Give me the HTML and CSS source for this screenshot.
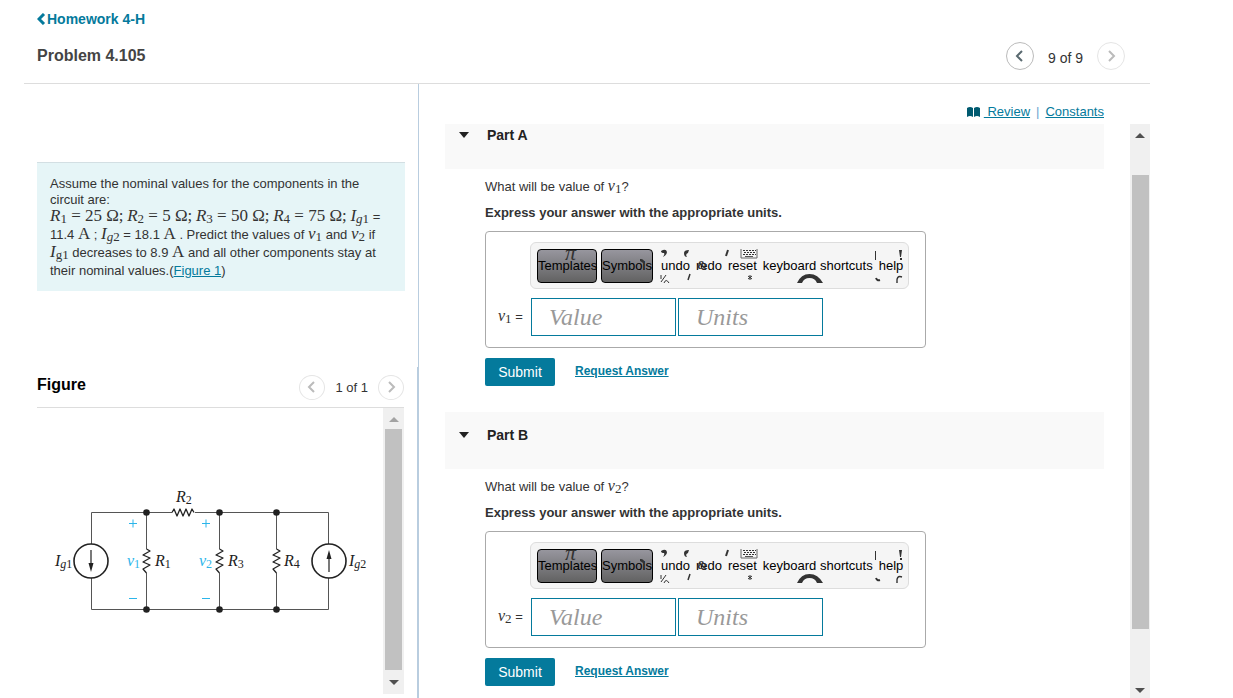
FILE: index.html
```html
<!DOCTYPE html>
<html lang="en">
<head>
    <meta charset="UTF-8">
    <meta name="viewport" content="width=device-width, initial-scale=1.0">
    <title>Problem 4.105</title>
    <link rel="stylesheet" href="styles.css">
</head>
<body>

<svg class="defs" aria-hidden="true">
    <symbol id="chev-left" viewBox="0 0 12 14"><path d="M8 2 L3 7 L8 12" fill="none" stroke="currentColor" stroke-width="2"/></symbol>
    <symbol id="chev-right" viewBox="0 0 12 14"><path d="M4 2 L9 7 L4 12" fill="none" stroke="currentColor" stroke-width="2"/></symbol>
    <symbol id="arrow-up" viewBox="0 0 10 6"><path d="M0 5 L5 0 L10 5 Z" fill="currentColor"/></symbol>
    <symbol id="arrow-down" viewBox="0 0 10 6"><path d="M0 0 L10 0 L5 5 Z" fill="currentColor"/></symbol>
    <symbol id="arrow-part" viewBox="0 0 10 6"><path d="M0 0 L10 0 L5 6 Z" fill="currentColor"/></symbol>
    <symbol id="glyphs" viewBox="1 1 378 47">
        <text x="35" y="18" font-family="Liberation Serif, serif" font-style="italic" font-size="22">π</text>
        <path d="M110 17 Q115 16 115 24 Q113 20 110 19 Z"/>
        <path d="M131 9 Q136 6 137 10 Q137 13 133 15 Q135 12 134 11 Q131 11 131 9 Z"/>
        <path d="M159 8 Q154 8 154 11 Q154 15 157 15 Q155 12 158 11 Z"/>
        <text x="167" y="27" font-family="Liberation Serif, serif" font-weight="bold" font-size="13">&amp;</text>
        <path d="M198 8 L196 14" stroke="#333" stroke-width="2"/>
        <path d="M211 7 V16 H227 V7" fill="none" stroke="#666"/>
        <path d="M213 8.500 H226 M214 10.500 H226 M213 12.500 H226" stroke="#333" stroke-width="1" stroke-dasharray="2 1"/>
        <path d="M215 14.500 H223" stroke="#555"/>
        <path d="M131 33 V37 M136 33 L131 40 M134 41 Q136 36 139 41" fill="none" stroke="#333"/>
        <path d="M160 32 L158 38" stroke="#333" stroke-width="1.500"/>
        <path d="M220 33 V38 M218 34 L222 37 M222 34 L218 37" stroke="#333"/>
        <path d="M267 41 Q271 32 279.500 32 Q288 32 293 41 H287 Q285 36 279.500 36 Q274 36 272 41 Z"/>
        <path d="M345.500 9 V18" stroke="#333"/>
        <path d="M369 8 H372 L371 15 H370 Z M370 16 H372 V18 H370 Z"/>
        <path d="M346 36 Q347 39 350 38" fill="none" stroke="#333" stroke-width="2"/>
        <path d="M372 35 Q366 33 367 41" fill="none" stroke="#333" stroke-width="1.500"/>
    </symbol>
</svg>

<div class="page">
    <header class="header">
        <a href="#" class="back">
            <svg width="9" height="12" viewBox="0 0 9 12"><path d="M7 1 L2 6 L7 11" fill="none" stroke="currentColor" stroke-width="3"/></svg>
            Homework 4-H
        </a>
        <div class="title-row">
            <h1>Problem 4.105</h1>
            <div class="pager">
                <button class="circle" aria-label="Previous problem"><svg width="12" height="14"><use href="#chev-left"/></svg></button>
                <span>9 of 9</span>
                <button class="circle off" aria-label="Next problem" disabled><svg width="12" height="14"><use href="#chev-right"/></svg></button>
            </div>
        </div>
    </header>

    <div class="columns">
        <div class="left">
            <div class="problem">
                <div class="statement">
                    <p>Assume the nominal values for the components in the circuit are:</p>
                    <p class="values"><span class="m"><i>R</i><sub>1</sub> = 25 Ω;</span> <span class="m"><i>R</i><sub>2</sub> = 5 Ω;</span> <span class="m"><i>R</i><sub>3</sub> = 50 Ω;</span> <span class="m"><i>R</i><sub>4</sub> = 75 Ω;</span> <span class="m"><i>I</i><sub><i>g</i>1</sub></span> = 11.4 <span class="m">A</span> ; <span class="m"><i>I</i><sub><i>g</i>2</sub></span> = 18.1 <span class="m">A</span> . Predict the values of <span class="m"><i>v</i><sub>1</sub></span> and <span class="m"><i>v</i><sub>2</sub></span> if <span class="m"><i>I</i><sub>g1</sub></span> decreases to 8.9 <span class="m">A</span> and all other components stay at their nominal values.(<a href="#figure">Figure 1</a>)</p>
                </div>
            </div>
            <div class="figure" id="figure">
                <div class="figure-head">
                    <h2>Figure</h2>
                    <div class="pager small">
                        <button class="circle off" aria-label="Previous figure" disabled><svg width="12" height="14"><use href="#chev-left"/></svg></button>
                        <span>1 of 1</span>
                        <button class="circle off" aria-label="Next figure" disabled><svg width="12" height="14"><use href="#chev-right"/></svg></button>
                    </div>
                </div>
                <div class="figure-body">
                    <div class="canvas">
                        <svg class="circuit" width="340" height="150" viewBox="0 0 340 150" role="img" aria-label="Circuit with two current sources and four resistors">
                            <g fill="none" stroke="#555" stroke-width="1">
                                <path d="M51.5 64 V32.5 H132 M155 32.5 H288.5 V64 M51.5 98 V129.5 H288.5 V98"/>
                                <path d="M106.5 32 V69 M106.5 93 V129 M179.5 32 V69 M179.5 93 V129 M236.5 32 V69 M236.5 93 V129"/>
                            </g>
                            <g fill="none" stroke="#222" stroke-width="1.3" stroke-linejoin="round">
                                <path d="M132 32.5 L134 29 L137 36 L140 29 L143 36 L146 29 L149 36 L152 29 L154 32.5"/>
                                <path d="M106.5 69 L110 71 L103 75 L110 78 L103 82 L110 85 L103 89 L106.5 93"/>
                                <path d="M179.5 69 L183 71 L176 75 L183 78 L176 82 L183 85 L176 89 L179.5 93"/>
                                <path d="M236.5 69 L240 71 L233 75 L240 78 L233 82 L240 85 L233 89 L236.5 93"/>
                            </g>
                            <g fill="#fff" stroke="#222" stroke-width="1.6">
                                <circle cx="51" cy="81" r="17"/>
                                <circle cx="289" cy="81" r="17"/>
                            </g>
                            <path d="M51 70 V84 M289 92 V78" stroke="#222" stroke-width="1.2"/>
                            <path d="M48.500 83 H53.500 L51 92 Z M286.500 79 H291.500 L289 70 Z" fill="#222"/>
                            <g fill="#222">
                                <circle cx="106.500" cy="32.500" r="3.300"/>
                                <circle cx="179.500" cy="32.500" r="3.300"/>
                                <circle cx="236.500" cy="32.500" r="3.300"/>
                                <circle cx="106.500" cy="129.500" r="3.300"/>
                                <circle cx="179.500" cy="129.500" r="3.300"/>
                                <circle cx="236.500" cy="129.500" r="3.300"/>
                            </g>
                            <path d="M89 43.500 H97 M93 39.500 V47.500 M162 43.500 H170 M166 39.500 V47.500 M89 118.500 H97 M162 118.500 H170" stroke="#2bb5ea"/>
                            <g class="labels">
                                <text x="136" y="22">R<tspan class="s" dy="2">2</tspan></text>
                                <text x="115" y="86">R<tspan class="s" dy="2">1</tspan></text>
                                <text x="188" y="86">R<tspan class="s" dy="2">3</tspan></text>
                                <text x="244" y="86">R<tspan class="s" dy="2">4</tspan></text>
                                <text x="15" y="86">I<tspan class="g" dy="2">g</tspan><tspan class="s">1</tspan></text>
                                <text x="309" y="86">I<tspan class="g" dy="2">g</tspan><tspan class="s">2</tspan></text>
                                <text class="blue" x="87" y="86">v<tspan class="s" dy="2">1</tspan></text>
                                <text class="blue" x="159" y="86">v<tspan class="s" dy="2">2</tspan></text>
                            </g>
                        </svg>
                    </div>
                    <div class="scrollbar fig-scroll">
                        <svg class="dim" width="10" height="6"><use href="#arrow-up"/></svg>
                        <div class="thumb"></div>
                        <svg width="10" height="6"><use href="#arrow-down"/></svg>
                    </div>
                </div>
            </div>
        </div>

        <div class="right">
            <nav class="links">
                <svg width="13" height="10" viewBox="0 0 13 10"><path d="M0 1 Q3 -1 6 1 V10 Q3 8 0 10 Z M7 1 Q10 -1 13 1 V10 Q10 8 7 10 Z" fill="#005a70"/></svg>
                <a href="#" class="review">&nbsp;Review</a><span class="bar">|</span><a href="#">Constants</a>
            </nav>
            <div class="scroller">
                <div class="parts">
                    <section class="part">
                        <div class="part-head"><svg width="10" height="6"><use href="#arrow-part"/></svg><h2>Part A</h2></div>
                        <div class="part-body">
                            <p>What will be value of <span class="m"><i>v</i><sub>1</sub></span>?</p>
                            <p class="bold">Express your answer with the appropriate units.</p>
                            <div class="answer">
                                <div class="toolbar">
                                    <button class="dark templates">Templates</button>
                                    <button class="dark symbols">Symbols</button>
                                    <button>undo</button>
                                    <button>redo</button>
                                    <button>reset</button>
                                    <button>keyboard shortcuts</button>
                                    <button>help</button>
                                    <svg class="overlay" width="378" height="47" aria-hidden="true"><use href="#glyphs"/></svg>
                                </div>
                                <div class="entry">
                                    <label for="value-a"><span class="m"><i>v</i><sub>1</sub></span> =</label>
                                    <input type="text" id="value-a" placeholder="Value">
                                    <input type="text" id="units-a" placeholder="Units" aria-label="Units">
                                </div>
                            </div>
                            <div class="actions">
                                <button class="submit">Submit</button>
                                <a href="#">Request Answer</a>
                            </div>
                        </div>
                    </section>
                    <section class="part">
                        <div class="part-head"><svg width="10" height="6"><use href="#arrow-part"/></svg><h2>Part B</h2></div>
                        <div class="part-body">
                            <p>What will be value of <span class="m"><i>v</i><sub>2</sub></span>?</p>
                            <p class="bold">Express your answer with the appropriate units.</p>
                            <div class="answer">
                                <div class="toolbar">
                                    <button class="dark templates">Templates</button>
                                    <button class="dark symbols">Symbols</button>
                                    <button>undo</button>
                                    <button>redo</button>
                                    <button>reset</button>
                                    <button>keyboard shortcuts</button>
                                    <button>help</button>
                                    <svg class="overlay" width="378" height="47" aria-hidden="true"><use href="#glyphs"/></svg>
                                </div>
                                <div class="entry">
                                    <label for="value-b"><span class="m"><i>v</i><sub>2</sub></span> =</label>
                                    <input type="text" id="value-b" placeholder="Value">
                                    <input type="text" id="units-b" placeholder="Units" aria-label="Units">
                                </div>
                            </div>
                            <div class="actions">
                                <button class="submit">Submit</button>
                                <a href="#">Request Answer</a>
                            </div>
                        </div>
                    </section>
                </div>
                <div class="scrollbar main-scroll">
                    <svg width="10" height="6"><use href="#arrow-up"/></svg>
                    <div class="thumb"></div>
                    <svg width="10" height="6"><use href="#arrow-down"/></svg>
                </div>
            </div>
        </div>
    </div>
</div>

</body>
</html>
```

FILE: styles.css
```css
* {
    box-sizing: border-box;
}
body {
    margin: 0;
    background: white;
    color: #333;
    font-family: "Liberation Sans", Arial, sans-serif;
    font-size: 13px;
    line-height: 16px;
}
h1, h2, p {
    margin: 0;
}
button {
    font-family: inherit;
    padding: 0;
    border: none;
    background: none;
}
a {
    color: #047a9c;
}
.defs {
    display: none;
}
.page {
    display: flex;
    flex-direction: column;
    height: 100vh;
    margin: 0 83px 0 24px;
    overflow: hidden;
}

/* header */
.header {
    padding: 11px 25px 13px 13px;
    border-bottom: 1px solid #ddd;
}
.back {
    display: flex;
    align-items: center;
    gap: 1px;
    font-size: 14px;
    font-weight: bold;
    text-decoration: none;
}
.title-row {
    display: flex;
    justify-content: space-between;
    align-items: center;
    margin-top: 15px;
}
h1 {
    font-size: 16px;
    color: #444;
}
.pager {
    display: flex;
    align-items: center;
    gap: 14px;
    font-size: 14px;
}
.pager span {
    padding-top: 4px;
}
.circle {
    display: flex;
    align-items: center;
    justify-content: center;
    width: 28px;
    height: 28px;
    border: 1px solid #bbb;
    border-radius: 50%;
    color: #5a6a70;
}
.circle.off {
    border-color: #e5e5e5;
    color: #bbb;
}
.small {
    gap: 10px;
    font-size: 13px;
}
.small .circle {
    width: 26px;
    height: 25px;
}
.small span {
    padding-top: 2px;
}

/* left column */
.columns {
    display: flex;
    flex: 1;
    min-height: 0;
}
.left {
    display: flex;
    flex-direction: column;
    width: 395px;
}
.problem {
    height: 283px;
    padding: 78px 13px 0 13px;
    border-right: 1px solid #b9cddf;
}
.statement {
    padding: 13px 13px 11px;
    border-top: 1px solid #d3dfe3;
    background: #e6f5f7;
}
.values {
    line-height: 18px;
}
.m {
    font-family: "Liberation Serif", "Times New Roman", serif;
    font-size: 17px;
    line-height: 0;
    white-space: nowrap;
}
.m sub {
    font-size: 13px;
    line-height: 0;
    vertical-align: -2px;
}
.figure {
    display: flex;
    flex: 1;
    flex-direction: column;
    min-height: 0;
    padding: 0 13px 4px;
    border-right: 2px solid #b9cddf;
}
.figure-head {
    display: flex;
    justify-content: space-between;
    align-items: center;
    height: 41px;
    border-bottom: 1px solid #ddd;
}
.figure-head h2 {
    font-size: 16px;
    color: black;
    padding-bottom: 5px;
}
.figure-body {
    display: flex;
    flex: 1;
    min-height: 0;
}
.canvas {
    flex: 1;
    padding: 72px 0 0 3px;
}
.circuit {
    display: block;
}
.labels {
    font-family: "Liberation Serif", "Times New Roman", serif;
    font-size: 16px;
    font-style: italic;
    fill: #222;
}
.labels .s {
    font-size: 12px;
    font-style: normal;
}
.labels .g {
    font-size: 12px;
}
.labels .blue {
    fill: #2bb5ea;
}

/* scrollbars */
.scrollbar {
    display: flex;
    flex-direction: column;
    align-items: center;
    flex-shrink: 0;
    width: 20px;
    background: #f0f0f0;
    color: #505050;
}
.scrollbar .dim {
    color: #a3a3a3;
}
.thumb {
    width: 17px;
    background: #c1c1c1;
}
.fig-scroll {
    width: 21px;
    padding: 9px 0 8px;
}
.fig-scroll .thumb {
    flex: 1;
    margin: 6px 0 10px;
}
.main-scroll {
    padding: 9px 0 4px;
}
.main-scroll .thumb {
    height: 81%;
    margin: 36px 0 auto;
}

/* right column */
.right {
    display: flex;
    flex: 1;
    flex-direction: column;
    min-width: 0;
    padding-left: 26px;
}
.links {
    display: flex;
    justify-content: flex-end;
    align-items: center;
    height: 40px;
    padding: 15px 46px 0 0;
}
.review {
    margin-left: 4px;
}
.bar {
    margin: 0 6px;
    color: #6aa5cf;
}
.scroller {
    display: flex;
    flex: 1;
    gap: 26px;
    min-height: 0;
}
.parts {
    flex: 1;
    overflow: hidden;
}
/* list is scrolled down a little */
.parts .part:first-child {
    margin-top: -12px;
}
.part {
    height: 300px;
}
.part-head {
    display: flex;
    align-items: center;
    gap: 18px;
    height: 57px;
    padding: 0 14px 11px;
    background: #f9f9f9;
    color: #222;
}
.part-head h2 {
    font-size: 14px;
}
.part-body {
    padding: 10px 0 0 40px;
}
.part-body p {
    margin-bottom: 10px;
}
.part-body .m {
    font-size: 16px;
}
.part-body .bold {
    font-weight: bold;
}
.answer {
    width: 441px;
    height: 117px;
    padding: 10px 16px 0 12px;
    border: 1px solid #aaa;
    border-radius: 4px;
}
.toolbar {
    position: relative;
    display: flex;
    align-items: center;
    gap: 6px;
    width: 379px;
    height: 47px;
    margin-left: 32px;
    padding-left: 6px;
    border: 1px solid #ddd;
    border-radius: 6px;
    background: #f5f5f5;
}
.toolbar button {
    font-size: 13px;
    color: black;
    white-space: nowrap;
}
.toolbar .dark {
    height: 34px;
    border: 1px solid black;
    border-radius: 4px;
    background: linear-gradient(#97969e, #626262);
}
.toolbar .templates {
    width: 60px;
    margin-right: -2px;
}
.toolbar .symbols {
    width: 52px;
    margin-right: 2px;
}
.overlay {
    position: absolute;
    top: 0;
    left: 0;
    fill: #333;
    pointer-events: none;
}
.entry {
    display: flex;
    align-items: center;
    gap: 2px;
    margin-top: 9px;
}
.entry label {
    width: 31px;
}
.entry input {
    width: 145px;
    height: 38px;
    padding: 0 17px;
    border: 1px solid #047a9c;
    font-family: "Liberation Serif", "Times New Roman", serif;
    font-size: 24px;
    font-style: italic;
}
.entry input::placeholder {
    color: #999;
}
.actions {
    display: flex;
    gap: 20px;
    margin-top: 10px;
}
.submit {
    width: 70px;
    height: 28px;
    border-radius: 2px;
    background: #047a9c;
    color: white;
    font-size: 14px;
}
.actions a {
    padding-top: 5px;
    font-size: 12px;
    font-weight: bold;
}
```
